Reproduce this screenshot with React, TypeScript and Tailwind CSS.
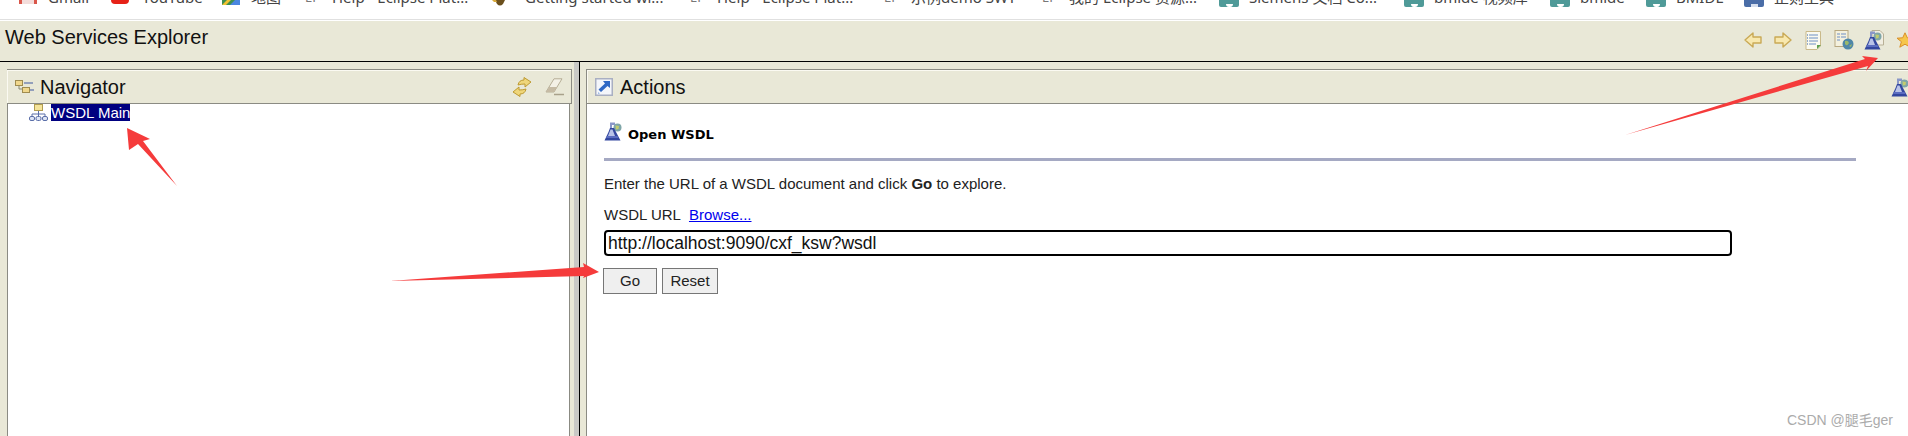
const bookmarks = [
  { label: "Gmail", width: "w-[92px]", icon: "gmail" },
  { label: "YouTube", width: "w-[111px]", icon: "youtube" },
  { label: "地图", width: "w-[83px]", icon: "maps" },
  { label: "Help - Eclipse Plat...", width: "w-[187px]", icon: "ep" },
  { label: "Getting started wi...", width: "w-[198px]", icon: "gold" },
  { label: "Help - Eclipse Plat...", width: "w-[194px]", icon: "ep" },
  { label: "示例demo SWT", width: "w-[158px]", icon: "ep" },
  { label: "我的 Eclipse 资源...", width: "w-[177px]", icon: "ep" },
  { label: "Siemens 文档 Co...", width: "w-[185px]", icon: "s" },
  { label: "bmide 视频库", width: "w-[146px]", icon: "s" },
  { label: "bmide", width: "w-[96px]", icon: "s" },
  { label: "BMIDE", width: "w-[98px]", icon: "s" },
  { label: "正则工具", width: "w-[91px]", icon: "r" },
];

function BookmarkIcon({ type }: { type: string }) {
  if (type === "gmail") {
    return (
      <div className="mr-[11px] flex h-[4px] w-[18px] justify-between rounded-b-sm bg-[#f3dddb]">
        <div className="w-[3px] bg-[#d9564a]" />
        <div className="w-[3px] bg-[#d9564a]" />
      </div>
    );
  }
  if (type === "youtube") {
    return <div className="mr-[13px] h-[4px] w-[18px] rounded-b-[4px] bg-[#e62117]" />;
  }
  if (type === "maps") {
    return (
      <svg className="mr-[11px]" width="18" height="5" viewBox="0 0 18 5">
        <rect width="18" height="5" fill="#3f8f4f" />
        <path d="M0 5 L5 0 L9 0 L4 5 Z" fill="#f2c230" />
        <path d="M8 5 L13 0 L18 0 L18 5 Z" fill="#4a86e0" />
      </svg>
    );
  }
  if (type === "ep") {
    return <span className="-mt-[16px] mr-[10px] w-[17px] text-[13px] leading-[26px] text-[#777]">EP</span>;
  }
  if (type === "gold") {
    return (
      <svg className="mr-[16px]" width="17" height="6" viewBox="0 0 17 6">
        <path d="M3 0 H13 L11 4 Q8 7 5 4 Z" fill="#6b4f1d" />
        <path d="M0 0 H4 L5 2 H2 Z" fill="#d8a93a" />
      </svg>
    );
  }
  return (
    <div
      className={
        type === "s"
          ? "mr-[10px] flex h-[7px] w-[20px] items-end justify-center rounded-b-[2px] bg-[#4f9a98]"
          : "mr-[10px] flex h-[7px] w-[20px] items-end justify-center rounded-b-[2px] bg-[#4a6da7]"
      }
    >
      <div className={type === "s" ? "h-[3px] w-[7px] rounded-b-sm bg-white" : "h-[3px] w-[7px] bg-[#d5deee]"} />
    </div>
  );
}

function BookmarkBar() {
  return (
    <div className="flex h-[19px] shrink-0 items-start overflow-hidden bg-white pl-[19px] font-['Noto_Sans','Noto_Sans_CJK_SC',sans-serif] text-[15px] text-[#444]">
      {bookmarks.map((b, i) => (
        <div key={i} className={`${b.width} flex shrink-0 items-start`}>
          <BookmarkIcon type={b.icon} />
          <span className="-mt-[16px] leading-[26px] whitespace-nowrap">{b.label}</span>
        </div>
      ))}
    </div>
  );
}

function BackIcon({ flip }: { flip?: boolean }) {
  return (
    <svg width="18" height="16" viewBox="0 0 18 16" className={flip ? "-scale-x-100" : ""}>
      <path
        d="M1 8 L9 1 V5 H17 V11 H9 V15 Z"
        fill="#f8e8ae"
        stroke="#c9a956"
        strokeWidth="1.4"
        strokeLinejoin="round"
      />
    </svg>
  );
}

function DocIcon() {
  return (
    <svg width="17" height="19" viewBox="0 0 17 19">
      <path d="M1 .5 H15.5 V15 L12 18.5 H1 Z" fill="#fbfaf0" stroke="#c9b98a" />
      <path d="M4 4 H13 M4 7 H13 M4 10 H13 M4 13 H11" stroke="#6f8fc4" strokeWidth="1.2" />
      <path d="M2 4 H3 M2 7 H3 M2 10 H3 M2 13 H3" stroke="#2f5fa8" strokeWidth="1.2" />
      <path d="M12 18 L16 14 H12 Z" fill="#5da04f" />
    </svg>
  );
}

function DocGlobeIcon() {
  return (
    <svg width="20" height="20" viewBox="0 0 20 20">
      <rect x="1" y=".5" width="13" height="16" fill="#f4f1de" stroke="#b8a880" />
      <path d="M3 4 H6 M3 7 H6 M3 10 H6 M7 4 H12 M7 7 H12" stroke="#6f8fc4" strokeWidth="1.2" />
      <circle cx="14" cy="14" r="5.5" fill="#4f87a8" />
      <path d="M11 11 Q14 10 15 13 Q13 17 11 14 Z" fill="#9cb96a" />
      <path d="M15 16 L18 14 L17 17 Z" fill="#9cb96a" />
    </svg>
  );
}

// flask with a globe; the toolbar one also has a sheet of paper behind it
function WsdlIcon({ doc }: { doc?: boolean }) {
  return (
    <svg width="20" height="20" viewBox="0 0 20 20" className="shrink-0">
      {doc && <path d="M8 .5 H16 L19.5 4 V15 H8 Z" fill="#f1eee2" stroke="#b8b096" />}
      <circle cx="13.5" cy="6.5" r="4" fill="#7fa6a8" />
      <path d="M11.5 4.5 L15 5 L14.5 8 L12 8.5 Z" fill="#c3cc6e" />
      <path d="M6 1.5 L11 1.5 L11 4 L8 4 L8 8 L6 8 Z" fill="#8a97c8" />
      <path d="M6 7 H10 L12 11 L16.5 19.5 H.5 L4.5 11 Z" fill="#33479f" />
      <path d="M6.5 8.5 H8.5 L11 15 H4 Z" fill="#b9c3e8" />
      <path d="M3 15 H13.5 L14.5 17 H2 Z" fill="#5a6cc0" />
    </svg>
  );
}

function StarIcon() {
  return (
    <svg width="19" height="16" viewBox="0 0 19 16" className="shrink-0">
      <path
        d="M9 .8 L11.3 5.8 L17 6.2 L12.6 9.7 L14.2 15.2 L9 12.2 L3.8 15.2 L5.4 9.7 L1 6.2 L6.7 5.8 Z"
        fill="#f6c64a"
        stroke="#d98f2a"
      />
    </svg>
  );
}

function NavigatorIcon() {
  return (
    <svg width="19" height="14" viewBox="0 0 19 14">
      <path d="M4 5 V9 H8" fill="none" stroke="#8a8a70" />
      <rect x=".5" y=".5" width="7" height="5" fill="#f0d78c" stroke="#a08c50" />
      <rect x="7.5" y="7.5" width="7" height="5" fill="#f0d78c" stroke="#a08c50" />
      <path d="M9 3 H18" stroke="#5a6ea8" strokeWidth="1.2" />
      <path d="M15 10 H19" stroke="#5a6ea8" strokeWidth="1.2" />
    </svg>
  );
}

function SyncIcon() {
  return (
    <svg width="20" height="20" viewBox="0 0 20 20">
      <path d="M6 8 Q7 3 12 3 V0.5 L19 5 L13 10 V7 Q9 7 6 8 Z" fill="#efd67a" stroke="#bd9a32" />
      <path d="M14 12 Q13 17 8 17 V19.5 L1 15 L7 10 V13 Q11 13 14 12 Z" fill="#efd67a" stroke="#bd9a32" />
    </svg>
  );
}

function EraserIcon() {
  return (
    <svg width="19" height="18" viewBox="0 0 19 18">
      <path d="M9 .8 H17 L9 14 H1 Z" fill="#f4f1e6" stroke="#b5ad96" />
      <path d="M4 9 L1 14 H9 L12 9 Z" fill="#c6bba4" />
      <path d="M9 16.5 H19" stroke="#a8a18a" strokeWidth="1.5" />
    </svg>
  );
}

function ActionsIcon() {
  return (
    <svg width="18" height="18" viewBox="0 0 18 18" className="shrink-0">
      <rect x=".75" y=".75" width="16.5" height="16.5" fill="#f4f6fb" stroke="#a9afc2" strokeWidth="1.5" />
      <path d="M8 3 H15 V10 L12.5 8 L6 14 L3.5 11.5 L10 5.5 Z" fill="#2f68c4" />
      <path d="M3 14 L5 15.5 L3 16 Z" fill="#9ab8e4" />
    </svg>
  );
}

function WsdlMainIcon() {
  return (
    <svg width="19" height="17" viewBox="0 0 19 17" className="shrink-0">
      <rect x="5.5" y=".5" width="8" height="6" fill="#f5e49a" stroke="#b09c50" />
      <path d="M9.5 7 V10 M3 13 V10 H16 V13 M9.5 10 V13" fill="none" stroke="#5a6ea8" />
      <rect x=".5" y="12.5" width="5" height="4" rx="1.5" fill="#dfe6f5" stroke="#5a6ea8" />
      <rect x="7" y="12.5" width="5" height="4" rx="1.5" fill="#dfe6f5" stroke="#5a6ea8" />
      <rect x="13.5" y="12.5" width="5" height="4" rx="1.5" fill="#dfe6f5" stroke="#5a6ea8" />
    </svg>
  );
}

function Arrows() {
  return (
    <svg className="pointer-events-none absolute top-0 left-0" width="1908" height="436" viewBox="0 0 1908 436">
      <g fill="#f53b3b">
        <polygon points="1625,135 1865,59 1862,56 1878,58 1866,71 1868,66" />
        <polygon points="390,281 584,267 583,263 599,272 583,278 584,276" />
        <polygon points="177,186 138,144 129,150 127,128 150,139 143,141" />
      </g>
    </svg>
  );
}

export default function App() {
  return (
    <div className="relative flex h-[436px] w-[1908px] flex-col overflow-hidden bg-white font-['Liberation_Sans',sans-serif] text-black">
      <BookmarkBar />
      <div className="h-px shrink-0 bg-[#e0e0e0]" />
      <div className="h-px shrink-0 bg-white" />

      {/* Title bar */}
      <div className="flex h-[40px] shrink-0 items-center justify-between bg-[#e9e8d7] pl-[5px] text-[20px] text-[#111]">
        <span className="-mt-[9px]">Web Services Explorer</span>
        <div className="-mt-[2px] flex items-center">
          <BackIcon />
          <div className="ml-[12px]">
            <BackIcon flip />
          </div>
          <div className="ml-[13px]">
            <DocIcon />
          </div>
          <div className="ml-[12px]">
            <DocGlobeIcon />
          </div>
          <div className="ml-[10px]">
            <WsdlIcon doc />
          </div>
          <div className="mr-[-7px] ml-[12px]">
            <StarIcon />
          </div>
        </div>
      </div>
      <div className="h-px shrink-0 bg-black" />

      <div className="flex min-h-0 flex-1 bg-[#e9e8d7]">
        {/* Navigator frame */}
        <div className="flex w-[574px] shrink-0 flex-col pt-[7px] pl-[7px]">
          <div className="flex h-[35px] w-[565px] shrink-0 items-center justify-between border-y border-r border-[#8b8b83] border-l-[#8b8b83] bg-[#e9e8d7] pr-[7px] pl-[8px] text-[20px] text-[#111] shadow-[inset_1px_1px_0_#fbfaf2]">
            <div className="flex items-center gap-[6px]">
              <NavigatorIcon />
              <span>Navigator</span>
            </div>
            <div className="flex items-center gap-[13px]">
              <SyncIcon />
              <EraserIcon />
            </div>
          </div>
          <div className="w-[563px] flex-1 border-x border-[#8b8b83] bg-white pl-[21px]">
            <div className="flex items-start gap-[3px]">
              <WsdlMainIcon />
              <span className="h-[17px] bg-[#000080] text-[15px] leading-[17px] text-white">WSDL Main</span>
            </div>
          </div>
        </div>

        <div className="w-[5px] shrink-0 bg-[#c9c9c6]" />
        <div className="w-px shrink-0 bg-black" />

        {/* Actions frame */}
        <div className="flex min-w-0 flex-1 flex-col pt-[7px] pl-[6px]">
          <div className="flex h-[35px] shrink-0 items-center justify-between border-y border-l border-[#8b8b83] bg-[#e9e8d7] pl-[8px] text-[20px] text-[#111] shadow-[inset_1px_1px_0_#fbfaf2]">
            <div className="flex items-center gap-[7px]">
              <ActionsIcon />
              <span>Actions</span>
            </div>
            <div className="mr-[-3px]">
              <WsdlIcon />
            </div>
          </div>
          <div className="flex-1 border-l border-[#8b8b83] bg-white pt-[17px] pl-[17px] text-[15px] text-[#222]">
            <div className="flex h-[20px] items-center gap-[4px] font-['DejaVu_Sans',sans-serif] text-[13px] font-bold text-black">
              <WsdlIcon />
              <span className="mt-[7px]">Open WSDL</span>
            </div>
            <div className="mt-[17px] h-[3px] w-[1252px] bg-[#a5a9c3]" />
            <p className="mt-[14px] leading-[17px]">
              Enter the URL of a WSDL document and click <b>Go</b> to explore.
            </p>
            <div className="mt-[14px] flex gap-[8px] leading-[17px]">
              <span>WSDL URL</span>
              <a href="#" className="text-[#0000ee] underline">
                Browse...
              </a>
            </div>
            <input
              readOnly
              value="http://localhost:9090/cxf_ksw?wsdl"
              className="mt-[7px] block h-[26px] w-[1128px] rounded-[4px] border-2 border-black bg-white px-[2px] text-[17.5px] text-[#111] outline-none"
            />
            <div className="mt-[12px] -ml-[1px] flex gap-[5px]">
              <button className="h-[26px] w-[54px] border border-[#767676] bg-[#efefef] text-[15px]">Go</button>
              <button className="h-[26px] w-[56px] border border-[#767676] bg-[#efefef] text-[15px]">Reset</button>
            </div>
          </div>
        </div>
      </div>

      <Arrows />
      <span className="absolute top-[410px] right-[15px] font-['Liberation_Sans','Noto_Sans_CJK_SC',sans-serif] text-[14px] text-[#ababab]">
        CSDN @腿毛ger
      </span>
    </div>
  );
}
